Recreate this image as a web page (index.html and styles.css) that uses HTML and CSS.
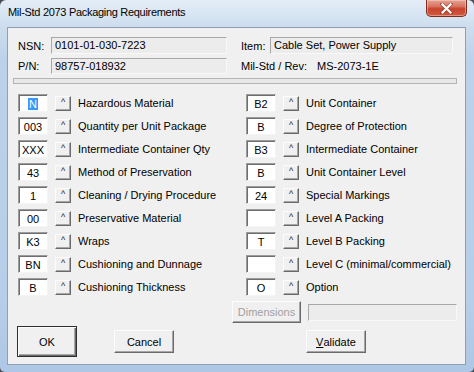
FILE: index.html
```html
<!DOCTYPE html>
<html>
<head>
<meta charset="utf-8">
<link rel="stylesheet" href="styles.css">
</head>
<body>
<div class="window">
  <div class="titlebar">
    <span class="title">Mil-Std 2073 Packaging Requirements</span>
    <div class="close">
      <svg width="13" height="11" viewBox="0 0 13 11"><path d="M2 1 L11 10 M11 1 L2 10" stroke="#5a1a10" stroke-width="3.4" stroke-linecap="square" opacity="0.45"/><path d="M2.5 1.5 L10.5 9.5 M10.5 1.5 L2.5 9.5" stroke="#ffffff" stroke-width="2.2" stroke-linecap="square"/></svg>
    </div>
  </div>
  <div class="client">
    <div class="info">
      <div class="info-row">
        <span class="lbl l-nsn">NSN:</span>
        <div class="ro f-left">0101-01-030-7223</div>
        <span class="lbl l-item">Item:</span>
        <div class="ro f-right">Cable Set, Power Supply</div>
      </div>
      <div class="info-row row2">
        <span class="lbl l-nsn">P/N:</span>
        <div class="ro f-left f-short">98757-018932</div>
        <span class="lbl l-rev">Mil-Std / Rev:</span>
        <span class="val">MS-2073-1E</span>
      </div>
    </div>
    <div class="groove"></div>
    <div class="grid">
      <div class="row"><div class="box"><span class="sel">N</span></div><div class="spin">^</div><span class="rlbl">Hazardous Material</span></div>
      <div class="row"><div class="box">B2</div><div class="spin">^</div><span class="rlbl">Unit Container</span></div>
      <div class="row"><div class="box">003</div><div class="spin">^</div><span class="rlbl">Quantity per Unit Package</span></div>
      <div class="row"><div class="box">B</div><div class="spin">^</div><span class="rlbl">Degree of Protection</span></div>
      <div class="row"><div class="box">XXX</div><div class="spin">^</div><span class="rlbl">Intermediate Container Qty</span></div>
      <div class="row"><div class="box">B3</div><div class="spin">^</div><span class="rlbl">Intermediate Container</span></div>
      <div class="row"><div class="box">43</div><div class="spin">^</div><span class="rlbl">Method of Preservation</span></div>
      <div class="row"><div class="box">B</div><div class="spin">^</div><span class="rlbl">Unit Container Level</span></div>
      <div class="row"><div class="box">1</div><div class="spin">^</div><span class="rlbl">Cleaning / Drying Procedure</span></div>
      <div class="row"><div class="box">24</div><div class="spin">^</div><span class="rlbl">Special Markings</span></div>
      <div class="row"><div class="box">00</div><div class="spin">^</div><span class="rlbl">Preservative Material</span></div>
      <div class="row"><div class="box"></div><div class="spin">^</div><span class="rlbl">Level A Packing</span></div>
      <div class="row"><div class="box">K3</div><div class="spin">^</div><span class="rlbl">Wraps</span></div>
      <div class="row"><div class="box">T</div><div class="spin">^</div><span class="rlbl">Level B Packing</span></div>
      <div class="row"><div class="box">BN</div><div class="spin">^</div><span class="rlbl">Cushioning and Dunnage</span></div>
      <div class="row"><div class="box"></div><div class="spin">^</div><span class="rlbl">Level C (minimal/commercial)</span></div>
      <div class="row"><div class="box">B</div><div class="spin">^</div><span class="rlbl">Cushioning Thickness</span></div>
      <div class="row"><div class="box">O</div><div class="spin">^</div><span class="rlbl">Option</span></div>
    </div>
    <div class="dim-row">
      <div class="btn btn-dim">Dimensions</div>
      <div class="ro f-dim"></div>
    </div>
    <div class="buttons">
      <div class="btn btn-ok">OK</div>
      <div class="btn btn-cancel">Cancel</div>
      <div class="btn btn-validate"><u>V</u>alidate</div>
    </div>
  </div>
</div>
</body>
</html>
```
FILE: styles.css
```css
html, body {
  margin: 0;
  padding: 0;
}
body {
  width: 474px;
  height: 372px;
  overflow: hidden;
  background: #4b4f55;
  font-family: "Liberation Sans", Arial, sans-serif;
  font-size: 11px;
  color: #000;
}
.window {
  width: 474px;
  height: 372px;
  box-sizing: border-box;
  padding: 0 8px 7px 7px;
  border-radius: 6px 6px 5px 5px;
  background: linear-gradient(to bottom, #e4edf7 0px, #d8e5f3 14px, #cddded 27px, #bcd2ea 60px, #b7cee8 300px, #aec7e4 100%);
  display: flex;
  flex-direction: column;
}
.titlebar {
  height: 27px;
  display: flex;
  align-items: flex-start;
}
.title {
  margin: 6px 0 0 1px;
  font-size: 11px;
  letter-spacing: -0.3px;
  color: #000;
}
.close {
  margin-left: auto;
  margin-right: -1px;
  width: 41px;
  height: 17px;
  box-sizing: border-box;
  border: 1px solid #7d2c20;
  border-top: none;
  border-radius: 0 0 5px 5px;
  background: linear-gradient(to bottom, #e5a494 0%, #d9735f 40%, #c7432d 55%, #d15a3f 100%);
  box-shadow: inset 0 0 0 1px rgba(255, 220, 210, 0.45);
  display: flex;
  align-items: center;
  justify-content: center;
}
.client {
  width: 459px;
  height: 338px;
  box-sizing: border-box;
  border: 1px solid #8fa0b4;
  background: #f0f0f0;
  display: flex;
  flex-direction: column;
}
.info {
  padding: 9px 0 0 10px;
  display: flex;
  flex-direction: column;
  gap: 4px;
}
.info-row {
  display: flex;
  align-items: center;
  height: 17px;
}
.info-row.row2 {
  height: 16px;
}
.lbl {
  white-space: nowrap;
}
.l-nsn { width: 33px; }
.l-item { width: 29px; }
.l-rev { width: 76px; }
.ro {
  box-sizing: border-box;
  height: 17px;
  line-height: 15px;
  padding-left: 3px;
  background: #ececec;
  border: 1px solid;
  border-color: #a8a8a8 #f8f8f8 #f8f8f8 #a8a8a8;
  white-space: nowrap;
}
.f-left {
  width: 176px;
  margin-right: 14px;
}
.f-short { height: 16px; line-height: 14px; }
.f-right { width: 183px; }
.groove {
  margin: 4px 0 0 5px;
  width: 444px;
  height: 6px;
  box-sizing: border-box;
  border: 1px solid #b4b4b4;
  background: #e8e8e8;
}
.grid {
  margin-top: 10px;
  padding-left: 10px;
  display: grid;
  grid-template-columns: 228px auto;
  row-gap: 5px;
}
.row {
  display: flex;
  align-items: center;
  height: 18px;
}
.box {
  flex-shrink: 0;
  width: 30px;
  height: 18px;
  box-sizing: border-box;
  background: #fff;
  border: 1px solid;
  border-color: #9c9c9c #f4f4f4 #f4f4f4 #9c9c9c;
  box-shadow: inset 1px 1px 0 #6e6e6e;
  text-align: center;
  line-height: 16px;
  padding-top: 1px;
}
.sel {
  background: #3399ff;
  color: #fff;
  display: inline-block;
  line-height: 12px;
  padding: 0 1px;
}
.spin {
  flex-shrink: 0;
  margin-left: 7px;
  width: 16px;
  height: 15px;
  box-sizing: border-box;
  background: #f0f0f0;
  border: 1px solid;
  border-color: #fcfcfc #6a6a6a #6a6a6a #fcfcfc;
  box-shadow: inset -1px -1px 0 #a6a6a6;
  font-size: 9px;
  line-height: 11px;
  text-align: center;
  color: #222;
}
.rlbl {
  margin-left: 7px;
  white-space: nowrap;
}
.dim-row {
  margin-top: 5px;
  padding-left: 224px;
  display: flex;
  align-items: center;
}
.btn {
  box-sizing: border-box;
  background: #f0f0f0;
  border: 1px solid;
  border-color: #fcfcfc #6a6a6a #6a6a6a #fcfcfc;
  box-shadow: inset -1px -1px 0 #a6a6a6;
  display: flex;
  align-items: center;
  justify-content: center;
  white-space: nowrap;
}
.btn-dim {
  width: 69px;
  height: 22px;
  color: #a0a0a0;
}
.f-dim {
  margin-left: 7px;
  width: 149px;
  height: 17px;
}
.buttons {
  margin-top: 3px;
  padding-left: 9px;
  display: flex;
  align-items: center;
}
.btn-ok {
  width: 60px;
  height: 31px;
  border: 1px solid #2e2e2e;
  box-shadow: inset 1px 1px 0 #fcfcfc, inset -1px -1px 0 #6a6a6a, inset -2px -2px 0 #a6a6a6;
}
.btn-cancel {
  margin-left: 37px;
  width: 60px;
  height: 23px;
}
.btn-validate {
  margin-left: 132px;
  width: 60px;
  height: 23px;
}
```
